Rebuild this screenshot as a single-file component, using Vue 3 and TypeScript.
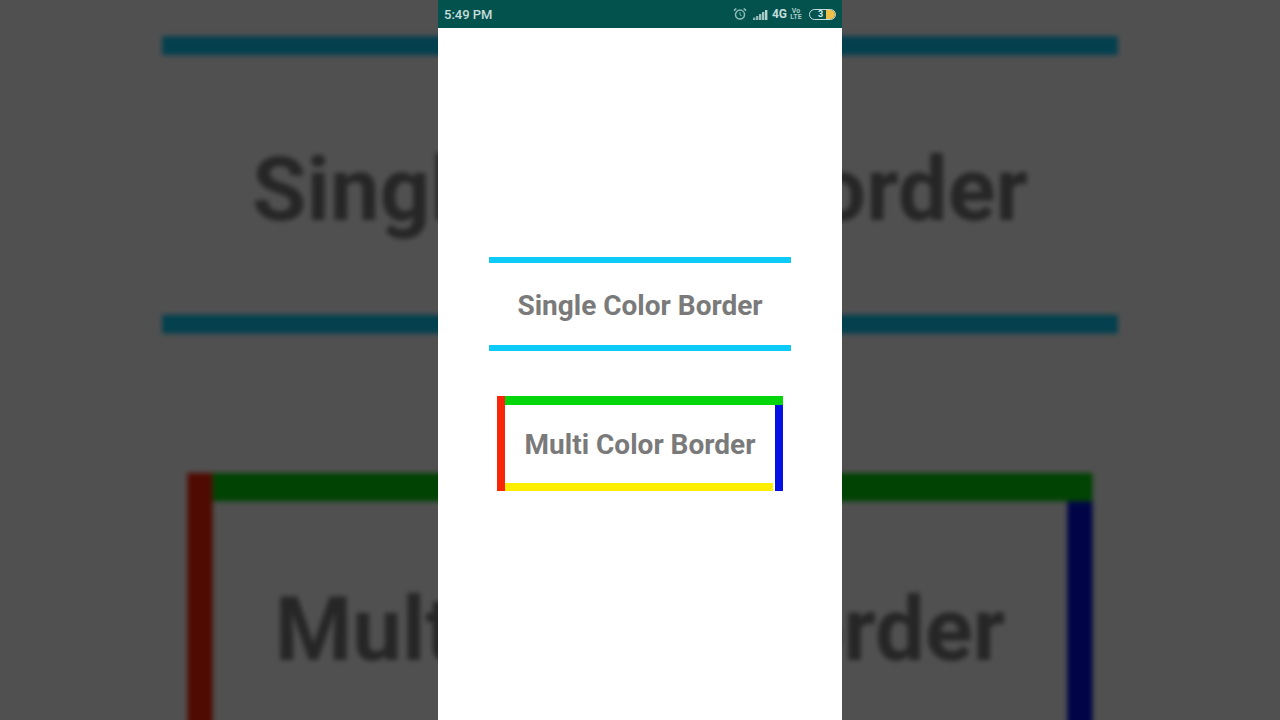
<script setup lang="ts">
const singleLabel = 'Single Color Border'
const multiLabel = 'Multi Color Border'
</script>

<template>
  <div class="stage">
    <div class="backdrop" aria-hidden="true">
      <div class="screen-body">
        <div class="single">
          <span class="single-text">{{ singleLabel }}</span>
        </div>
        <div class="multi-left">
          <div class="multi-top">
            <div class="multi-right">
              <div class="multi-bottom">
                <span class="multi-text">{{ multiLabel }}</span>
              </div>
            </div>
          </div>
        </div>
      </div>
    </div>
    <div class="dim"></div>

    <div class="phone">
      <header class="status">
        <span class="time">5:49 PM</span>
        <div class="status-icons">
          <svg class="alarm" width="14" height="14" viewBox="0 0 14 14" fill="none" stroke="#8fbdb7" stroke-width="1.5">
            <circle cx="7" cy="7.6" r="4.5" />
            <path d="M7 5.2v2.6l1.6 1" stroke-width="1" />
            <path d="M.9 3.6 3.3 1.5M13.1 3.6 10.7 1.5" stroke-width="1.6" />
          </svg>
          <svg class="signal" width="16" height="11" viewBox="0 0 16 11" fill="#b4d3cf">
            <rect x="0" y="8.6" width="2.4" height="2.4" opacity=".75" />
            <rect x="3" y="7" width="2.4" height="4" opacity=".8" />
            <rect x="6" y="5" width="2.4" height="6" opacity=".85" />
            <rect x="9" y="3" width="2.4" height="8" opacity=".9" />
            <rect x="12" y="1" width="2.4" height="10" />
          </svg>
          <span class="net">4G</span>
          <span class="volte"><span>Vo</span><span>LTE</span></span>
          <div class="battery">
            <span class="battery-num">3</span>
            <span class="battery-charge"></span>
          </div>
        </div>
      </header>
      <main class="screen-body">
        <div class="single">
          <span class="single-text">{{ singleLabel }}</span>
        </div>
        <div class="multi-left">
          <div class="multi-top">
            <div class="multi-right">
              <div class="multi-bottom">
                <span class="multi-text">{{ multiLabel }}</span>
              </div>
            </div>
          </div>
        </div>
      </main>
    </div>
  </div>
</template>

<style>
html, body { margin: 0; padding: 0; background: #505050; }
</style>

<style scoped>
.stage {
  position: relative;
  width: 1280px;
  height: 720px;
  overflow: hidden;
  background: #fff;
  display: flex;
  justify-content: center;
  font-family: Roboto, "Liberation Sans", sans-serif;
}
.backdrop {
  position: absolute;
  left: 438px;
  top: 28px;
  width: 404px;
  height: 692px;
  display: flex;
  transform-origin: 202px 331px;
  transform: scale(3.165);
  filter: blur(.8px);
}
.backdrop .screen-body {
  gap: 44px;
  padding-bottom: .6px;
}
.backdrop .multi-left { width: 286.6px; }
.dim {
  position: absolute;
  inset: 0;
  background: rgba(0, 0, 0, .686);
}
.phone {
  position: relative;
  width: 404px;
  height: 720px;
  display: flex;
  flex-direction: column;
  background: #fff;
}
.status {
  height: 28px;
  flex: none;
  background: #04524e;
  display: flex;
  align-items: center;
  justify-content: space-between;
  padding: 0 6px 0 6px;
  box-sizing: border-box;
}
.time {
  font-size: 13px;
  font-weight: 500;
  color: #c4dedb;
}
.status-icons {
  display: flex;
  align-items: center;
}
.alarm { margin-right: 6px; }
.signal { margin-right: 3px; }
.net {
  font-size: 12px;
  font-weight: 700;
  color: #c4dedb;
  margin-right: 2px;
}
.volte {
  display: flex;
  flex-direction: column;
  width: 14px;
  font-size: 7px;
  line-height: 6.5px;
  font-weight: 700;
  color: #a9cdc8;
  margin-right: 6px;
  align-items: center;
}
.battery {
  position: relative;
  width: 27px;
  height: 11px;
  box-sizing: border-box;
  border: 1px solid #c4dedb;
  border-radius: 6px;
  overflow: hidden;
  display: flex;
  justify-content: flex-end;
}
.battery-num {
  position: absolute;
  left: 8px;
  top: -1px;
  font-size: 9px;
  line-height: 11px;
  font-weight: 700;
  color: #d8ebe8;
}
.battery-charge {
  width: 9px;
  background: #f0c04a;
}
.screen-body {
  flex: 1;
  background: #fff;
  display: flex;
  flex-direction: column;
  align-items: center;
  justify-content: center;
  gap: 45px;
}
.single {
  width: 302px;
  height: 94px;
  box-sizing: border-box;
  border-top: 6px solid #0ccbf8;
  border-bottom: 6px solid #0ccbf8;
  display: flex;
  align-items: center;
  justify-content: center;
}
.single-text, .multi-text {
  font-size: 28px;
  font-weight: 700;
  line-height: 34px;
  color: #7a7a7a;
  white-space: nowrap;
}
.single-text { transform: translateY(2px); }
.multi-text { transform: translate(1px, 1px); }
.backdrop .multi-text { transform: translate(1px, 2px); }
.multi-left {
  width: 286px;
  height: 95px;
  box-sizing: border-box;
  border-left: 8px solid #fa2406;
  display: flex;
}
.multi-top {
  flex: 1;
  border-top: 9px solid #04d60c;
  display: flex;
}
.multi-right {
  flex: 1;
  border-right: 8px solid #0410e4;
  display: flex;
}
.multi-bottom {
  flex: 1;
  margin-right: 2px;
  border-bottom: 8px solid #ffee00;
  display: flex;
  align-items: center;
  justify-content: center;
}
</style>
